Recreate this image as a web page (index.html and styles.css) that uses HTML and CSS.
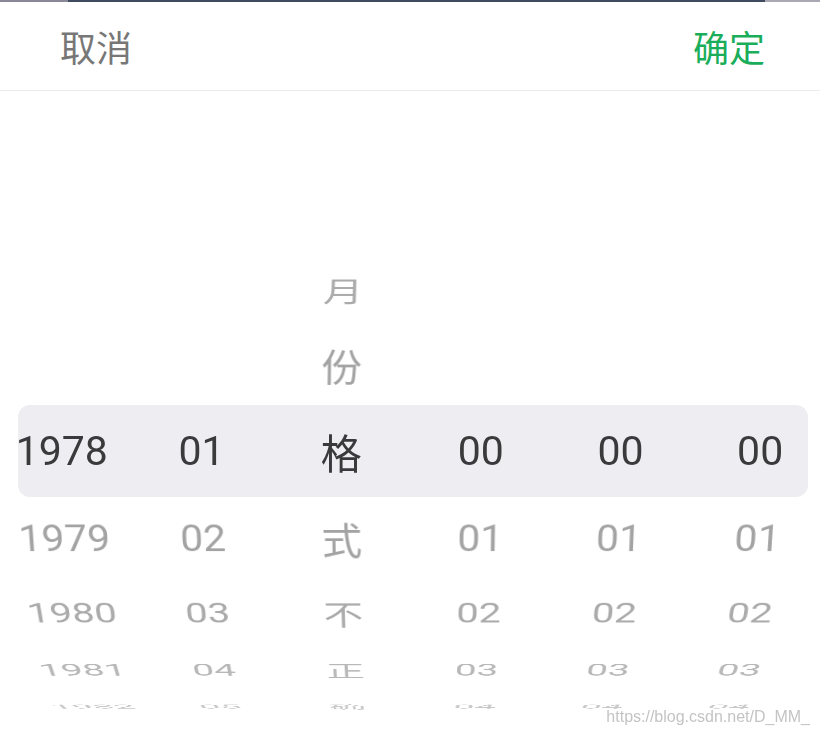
FILE: index.html
```html
<!DOCTYPE html>
<html lang="zh-CN">
<head>
  <meta charset="UTF-8" />
  <meta name="viewport" content="width=device-width, initial-scale=1.0"/>
  <title>日期选择</title>
  <link rel="stylesheet" href="styles.css">
</head>
<body>
  <div class="topline"></div>

  <!-- 顶部按钮 -->
  <div class="picker-head">
    <span class="btn-cancel">取消</span>
    <span class="btn-ok">确定</span>
  </div>

  <!-- 滚轮 -->
  <div class="picker">
    <div class="row up4"></div>
    <div class="row up3"></div>
    <div class="row up2">
      <span class="cell"></span><span class="cell"></span><span class="cell">月</span>
      <span class="cell"></span><span class="cell"></span><span class="cell"></span>
    </div>
    <div class="row up1">
      <span class="cell"></span><span class="cell"></span><span class="cell">份</span>
      <span class="cell"></span><span class="cell"></span><span class="cell"></span>
    </div>
    <div class="row cur">
      <span class="cell">1978</span><span class="cell">01</span><span class="cell">格</span>
      <span class="cell">00</span><span class="cell">00</span><span class="cell">00</span>
    </div>
    <div class="row down1">
      <span class="cell">1979</span><span class="cell">02</span><span class="cell">式</span>
      <span class="cell">01</span><span class="cell">01</span><span class="cell">01</span>
    </div>
    <div class="row down2">
      <span class="cell">1980</span><span class="cell">03</span><span class="cell">不</span>
      <span class="cell">02</span><span class="cell">02</span><span class="cell">02</span>
    </div>
    <div class="row down3">
      <span class="cell">1981</span><span class="cell">04</span><span class="cell">正</span>
      <span class="cell">03</span><span class="cell">03</span><span class="cell">03</span>
    </div>
    <div class="row down4">
      <span class="cell">1982</span><span class="cell">05</span><span class="cell">确</span>
      <span class="cell">04</span><span class="cell">04</span><span class="cell">04</span>
    </div>
  </div>

  <div class="watermark">https://blog.csdn.net/D_MM_</div>
</body>
</html>
```

FILE: styles.css
```css
html, body {
  margin: 0;
  height: 100%;
  overflow: hidden;
  background-color: #fff;
}
body {
  position: relative;
  font-family: "Roboto", "Noto Sans CJK SC", sans-serif;
}
.topline {
  height: 2px;
  background: linear-gradient(90deg, #8a8798 0, #8a8798 68px, #3f4b5e 68px, #3f4b5e 765px, #a9a9b3 765px);
}
.picker-head {
  height: 88px;
  display: flex;
  justify-content: space-between;
  align-items: center;
  padding: 0 55px 0 60px;
  border-bottom: 1px solid #ececec;
  font-family: "Noto Sans CJK SC", sans-serif;
  font-size: 36px;
}
.btn-cancel {
  color: #777;
}
.btn-ok {
  color: #1aad5a;
}
.picker {
  margin: 64px -10px 0 -8px;
  perspective: 2000px;
  perspective-origin: 50% 50%;
}
.row {
  display: grid;
  grid-template-columns: repeat(6, 1fr);
  font-size: 41px;
  color: #a3a3a3;
}
.cell {
  display: flex;
  align-items: center;
  justify-content: center;
}
.cur {
  position: relative;
  height: 92px;
  color: #3a3a3c;
}
.cur::before {
  content: '';
  position: absolute;
  top: 0;
  bottom: 0;
  left: 26px;
  right: 22px;
  background-color: #eeeef2;
  border-radius: 12px;
  z-index: -1;
}
.up1, .down1 {
  height: 83px;
}
.up2, .down2 {
  height: 75px;
  color: #ababab;
}
.up3, .down3 {
  height: 55px;
  color: #b8b8b8;
}
.up4, .down4 {
  height: 37px;
  color: #c9c9c9;
}
.up1 { transform: translateZ(-15px) rotateX(20deg); }
.up2 { transform: translateZ(-60px) rotateX(41deg); }
.up3 { transform: translateZ(-125px) rotateX(58deg); }
.up4 { transform: translateZ(-185px) rotateX(74deg); }
.down1 { transform: translateZ(-15px) rotateX(-20deg); }
.down2 { transform: translateZ(-60px) rotateX(-41deg); }
.down3 { transform: translateZ(-125px) rotateX(-58deg); }
.down4 { transform: translateZ(-185px) rotateX(-74deg); }
.watermark {
  position: absolute;
  right: 10px;
  bottom: 9px;
  font-family: "Liberation Sans", sans-serif;
  font-size: 16px;
  color: #c4c4c4;
}
```
